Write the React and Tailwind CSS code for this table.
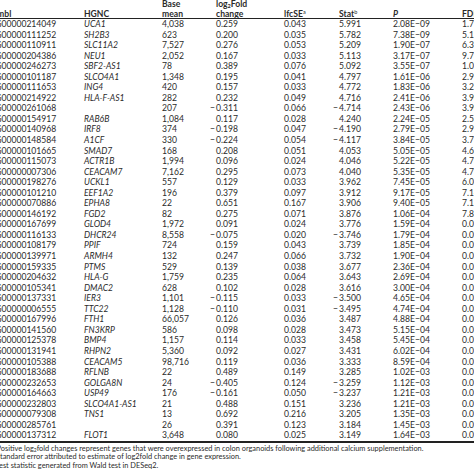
const rows = [
  ["ENSG00000214049", "UCA1", "4,038", "0.259", "0.043", "5.991", "2.08E−09", "1.77E−05"],
  ["ENSG00000111252", "SH2B3", "623", "0.200", "0.035", "5.782", "7.38E−09", "5.19E−05"],
  ["ENSG00000110911", "SLC11A2", "7,527", "0.276", "0.053", "5.209", "1.90E−07", "6.31E−04"],
  ["ENSG00000204386", "NEU1", "2,052", "0.167", "0.033", "5.113", "3.17E−07", "9.73E−04"],
  ["ENSG00000246273", "SBF2-AS1", "78", "0.389", "0.076", "5.092", "3.55E−07", "1.05E−03"],
  ["ENSG00000101187", "SLCO4A1", "1,348", "0.195", "0.041", "4.797", "1.61E−06", "2.95E−03"],
  ["ENSG00000111653", "ING4", "420", "0.157", "0.033", "4.772", "1.83E−06", "3.23E−03"],
  ["ENSG00000214922", "HLA-F-AS1", "282", "0.232", "0.049", "4.716", "2.41E−06", "3.90E−03"],
  ["ENSG00000261068", "", "207", "−0.311", "0.066", "−4.714", "2.43E−06", "3.90E−03"],
  ["ENSG00000154917", "RAB6B", "1,084", "0.117", "0.028", "4.240", "2.24E−05", "2.53E−02"],
  ["ENSG00000140968", "IRF8", "374", "−0.198", "0.047", "−4.190", "2.79E−05", "2.93E−02"],
  ["ENSG00000148584", "A1CF", "330", "−0.224", "0.054", "−4.117", "3.84E−05", "3.73E−02"],
  ["ENSG00000101665", "SMAD7", "168", "0.208", "0.051", "4.053", "5.05E−05", "4.63E−02"],
  ["ENSG00000115073", "ACTR1B", "1,994", "0.096", "0.024", "4.046", "5.22E−05", "4.73E−02"],
  ["ENSG00000007306", "CEACAM7", "7,162", "0.295", "0.073", "4.040", "5.35E−05", "4.73E−02"],
  ["ENSG00000198276", "UCKL1", "557", "0.129", "0.033", "3.962", "7.45E−05", "6.04E−02"],
  ["ENSG00000101210", "EEF1A2", "196", "0.379", "0.097", "3.912", "9.17E−05", "7.14E−02"],
  ["ENSG00000070886", "EPHA8", "22", "0.651", "0.167", "3.906", "9.40E−05", "7.16E−02"],
  ["ENSG00000146192", "FGD2", "82", "0.275", "0.071", "3.876", "1.06E−04", "7.88E−02"],
  ["ENSG00000167699", "GLOD4", "1,972", "0.091", "0.024", "3.776", "1.59E−04", "0.099"],
  ["ENSG00000116133", "DHCR24", "8,558", "−0.075", "0.020", "−3.746", "1.79E−04", "0.099"],
  ["ENSG00000108179", "PPIF", "724", "0.159", "0.043", "3.739", "1.85E−04", "0.099"],
  ["ENSG00000139971", "ARMH4", "132", "0.247", "0.066", "3.732", "1.90E−04", "0.099"],
  ["ENSG00000159335", "PTMS", "529", "0.139", "0.038", "3.677", "2.36E−04", "0.099"],
  ["ENSG00000204632", "HLA-G", "1,759", "0.235", "0.064", "3.643", "2.69E−04", "0.099"],
  ["ENSG00000105341", "DMAC2", "628", "0.102", "0.028", "3.616", "3.00E−04", "0.099"],
  ["ENSG00000137331", "IER3", "1,101", "−0.115", "0.033", "−3.500", "4.65E−04", "0.099"],
  ["ENSG00000006555", "TTC22", "1,128", "−0.110", "0.031", "−3.495", "4.74E−04", "0.099"],
  ["ENSG00000167996", "FTH1", "66,057", "0.126", "0.036", "3.487", "4.88E−04", "0.099"],
  ["ENSG00000141560", "FN3KRP", "586", "0.098", "0.028", "3.473", "5.15E−04", "0.099"],
  ["ENSG00000125378", "BMP4", "1,157", "0.114", "0.033", "3.458", "5.45E−04", "0.099"],
  ["ENSG00000131941", "RHPN2", "5,360", "0.092", "0.027", "3.431", "6.02E−04", "0.099"],
  ["ENSG00000105388", "CEACAM5", "98,716", "0.119", "0.036", "3.333", "8.59E−04", "0.099"],
  ["ENSG00000183688", "RFLNB", "22", "0.489", "0.149", "3.285", "1.02E−03", "0.099"],
  ["ENSG00000232653", "GOLGA8N", "24", "−0.405", "0.124", "−3.259", "1.12E−03", "0.099"],
  ["ENSG00000164663", "USP49", "176", "−0.161", "0.050", "−3.237", "1.21E−03", "0.099"],
  ["ENSG00000232803", "SLCO4A1-AS1", "21", "0.488", "0.151", "3.236", "1.21E−03", "0.099"],
  ["ENSG00000079308", "TNS1", "13", "0.692", "0.216", "3.205", "1.35E−03", "0.099"],
  ["ENSG00000285761", "", "26", "0.391", "0.123", "3.184", "1.45E−03", "0.099"],
  ["ENSG00000137312", "FLOT1", "3,648", "0.080", "0.025", "3.149", "1.64E−03", "0.099"],
];

const cols = "grid grid-cols-[105px_78px_54px_68px_55px_54px_69px_60px]";

// minus signs hang to the left of the digit column
const Num = ({ v }) =>
  v.startsWith("−") ? (
    <span>
      <span className="-ml-[6px] pr-[1px]">−</span>
      {v.slice(1)}
    </span>
  ) : (
    <span>{v}</span>
  );

export default function App() {
  return (
    <div className="w-[474px] h-[474px] overflow-hidden bg-white text-[#2b2b2b] font-['Lato',sans-serif]">
      <div className="ml-[-21px] w-[520px]">
        <div className={`${cols} h-[18px] items-end text-[8.6px] leading-[9.5px] font-bold`}>
          <div>Ensembl</div>
          <div>HGNC</div>
          <div>
            Base
            <br />
            mean
          </div>
          <div>
            log<sub className="text-[5.5px]">2</sub>Fold
            <br />
            change
          </div>
          <div>
            lfcSE<sup className="text-[5.5px] font-normal">a</sup>
          </div>
          <div>
            Stat<sup className="text-[5.5px] font-normal">b</sup>
          </div>
          <div className="italic">P</div>
          <div>
            FDR<sup className="text-[5.5px] font-normal">c</sup>
          </div>
        </div>
        <div className="border-t-[1.5px] border-[#222] border-b-2 w-[495px]">
          {rows.map((r) => (
            <div key={r[0]} className={`${cols} h-[10.55px] items-center text-[8.6px] leading-[10.55px]`}>
              <div>{r[0]}</div>
              <div className="italic">{r[1]}</div>
              <div>{r[2]}</div>
              <div>
                <Num v={r[3]} />
              </div>
              <div>{r[4]}</div>
              <div>
                <Num v={r[5]} />
              </div>
              <div className="whitespace-nowrap">{r[6]}</div>
              <div className="whitespace-nowrap">{r[7]}</div>
            </div>
          ))}
        </div>
        <div className="pl-[15px] pt-[2px] text-[7.4px] leading-[8.6px] whitespace-nowrap">
          <p>
            <sup className="text-[5px]">a</sup>Positive log<sub className="text-[5px]">2</sub>fold changes represent genes that were overexpressed in colon organoids following additional calcium supplementation.
          </p>
          <p>
            <sup className="text-[5px]">b</sup>standard error attributed to estimate of log2fold change in gene expression.
          </p>
          <p>
            <sup className="text-[5px]">c</sup>test statistic generated from Wald test in DESeq2.
          </p>
        </div>
      </div>
    </div>
  );
}
